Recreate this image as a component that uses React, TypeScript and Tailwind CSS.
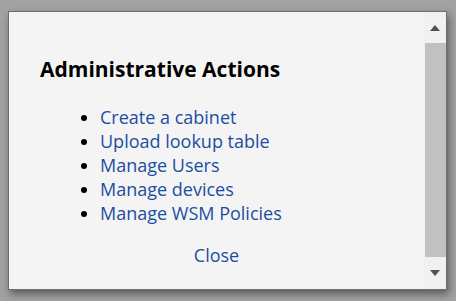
import React from 'react';

const links = [
  'Create a cabinet',
  'Upload lookup table',
  'Manage Users',
  'Manage devices',
  'Manage WSM Policies',
];

const App: React.FC = () => {
  return (
    <div className="h-[301px] w-[456px] bg-[#a2a2a2] pl-[8px] pt-[11px] font-['Open_Sans',sans-serif]">
      <div className="flex h-[279px] w-[439px] border border-[#6e6e6e] bg-[#f4f4f4] shadow-[2px_4px_8px_rgba(0,0,0,0.45)]">
        <div className="flex flex-1 flex-col pl-[31px] pt-[44px]">
          <h2 className="text-[21px] font-bold leading-[27px] text-black">Administrative Actions</h2>
          <ul className="mt-[22px] list-disc pl-[60px] text-[18px] leading-[24px] text-[#1c4ea0] marker:text-black">
            {links.map((l) => (
              <li key={l}>
                <a href="#">{l}</a>
              </li>
            ))}
          </ul>
          <div className="mt-[18px] pr-[31px] text-center text-[18px] leading-[24px] text-[#1c4ea0]">
            <a href="#">Close</a>
          </div>
        </div>
        <div className="flex w-[22px] flex-col items-center bg-[#f1f1f1]">
          <div className="flex h-[31px] w-full items-center justify-center">
            <svg width="10" height="6" viewBox="0 0 10 6">
              <path d="M0 6 L5 0 L10 6 Z" fill="#505050" />
            </svg>
          </div>
          <div className="ml-[1px] h-[214px] w-[21px] bg-[#c1c1c1]" />
          <div className="flex flex-1 w-full items-center justify-center">
            <svg width="10" height="6" viewBox="0 0 10 6">
              <path d="M0 0 L5 6 L10 0 Z" fill="#505050" />
            </svg>
          </div>
        </div>
      </div>
    </div>
  );
};

export default App;
